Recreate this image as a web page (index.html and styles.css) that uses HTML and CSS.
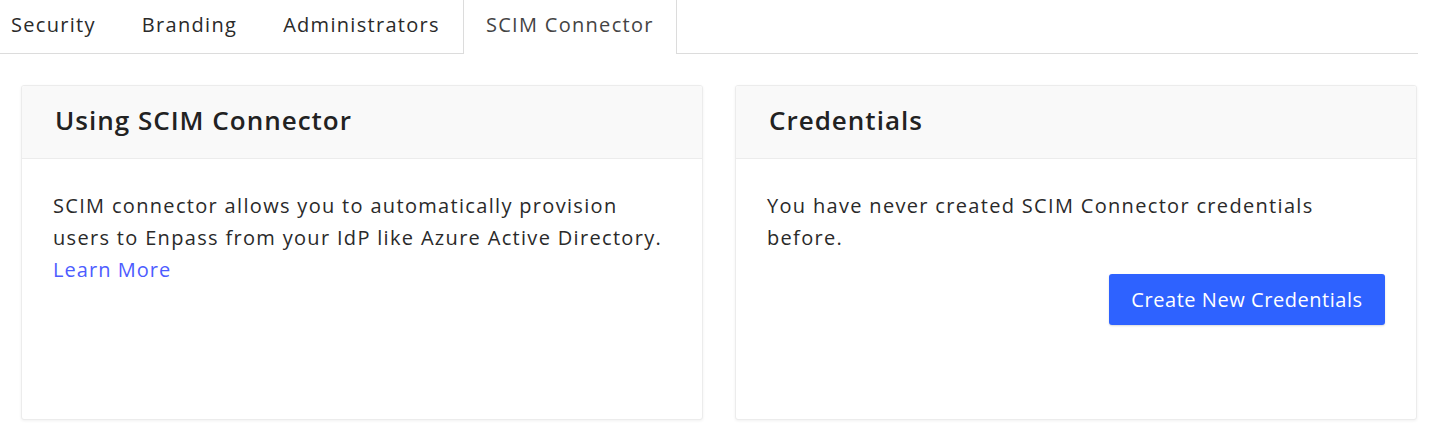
FILE: index.html
```html
<!DOCTYPE html>
<html>
<head>
<meta charset="utf-8">
<link rel="stylesheet" href="styles.css">
</head>
<body>
<nav class="tabs">
  <a class="tab first">Security</a>
  <a class="tab">Branding</a>
  <a class="tab">Administrators</a>
  <a class="tab active">SCIM Connector</a>
</nav>
<main class="cards">
  <section class="card">
    <header class="card-header"><h2>Using SCIM Connector</h2></header>
    <div class="card-body">
      <p>SCIM connector allows you to automatically provision<br>users to Enpass from your IdP like Azure Active Directory.<br><a class="link">Learn More</a></p>
    </div>
  </section>
  <section class="card">
    <header class="card-header"><h2>Credentials</h2></header>
    <div class="card-body">
      <p>You have never created SCIM Connector credentials<br>before.</p>
      <div class="actions"><button class="btn">Create New Credentials</button></div>
    </div>
  </section>
</main>
</body>
</html>
```
FILE: styles.css
```css
* { box-sizing: border-box; }
html, body { margin: 0; padding: 0; background: #fff; }
body {
  font-family: "Open Sans", "Noto Sans", sans-serif;
  color: #222;
  width: 1430px;
  height: 427px;
  overflow: hidden;
}
.tabs {
  display: flex;
  width: 1418px;
  height: 54px;
  border-bottom: 1px solid #dcdcdc;
}
.tab {
  display: flex;
  align-items: center;
  padding: 0 22px 6px 22px;
  font-size: 20px;
  letter-spacing: 1.3px;
  color: #2a2a2a;
  border-left: 1px solid transparent;
  border-right: 1px solid transparent;
  margin-bottom: -1px;
  white-space: nowrap;
}
.tab.first { padding-left: 10px; }
.tab.active {
  background: #fff;
  border-color: #dcdcdc;
  color: #444;
  height: 54px;
}
.cards {
  display: flex;
  gap: 32px;
  padding: 31px 0 0 21px;
}
.card {
  width: 682px;
  height: 335px;
  border: 1px solid #ececec;
  border-radius: 3px;
  box-shadow: 0 1px 3px rgba(0,0,0,0.06);
  background: #fff;
  overflow: hidden;
}
.card-header {
  height: 73px;
  background: #f9f9f9;
  border-bottom: 1px solid #ececec;
  display: flex;
  align-items: center;
  padding: 0 33px 4px;
}
.card-header h2 {
  margin: 0;
  font-size: 26px;
  font-weight: 600;
  letter-spacing: 1px;
  color: #222;
}
.card-body {
  padding: 31px 30px 0 31px;
}
.card-body p {
  margin: 0;
  font-size: 20px;
  line-height: 32px;
  letter-spacing: 1.32px;
  color: #2a2a2a;
  white-space: nowrap;
}
.link { color: #4d5cff; letter-spacing: 1.05px; }
.actions {
  display: flex;
  justify-content: flex-end;
  margin-top: 20px;
  margin-right: 1px;
}
.btn {
  font-family: inherit;
  width: 276px;
  height: 51px;
  border: none;
  border-radius: 3px;
  background: #2e62ff;
  color: #fff;
  font-size: 20px;
  letter-spacing: 0.55px;
  box-shadow: 0 1px 2px rgba(0,0,0,0.15);
}
```
